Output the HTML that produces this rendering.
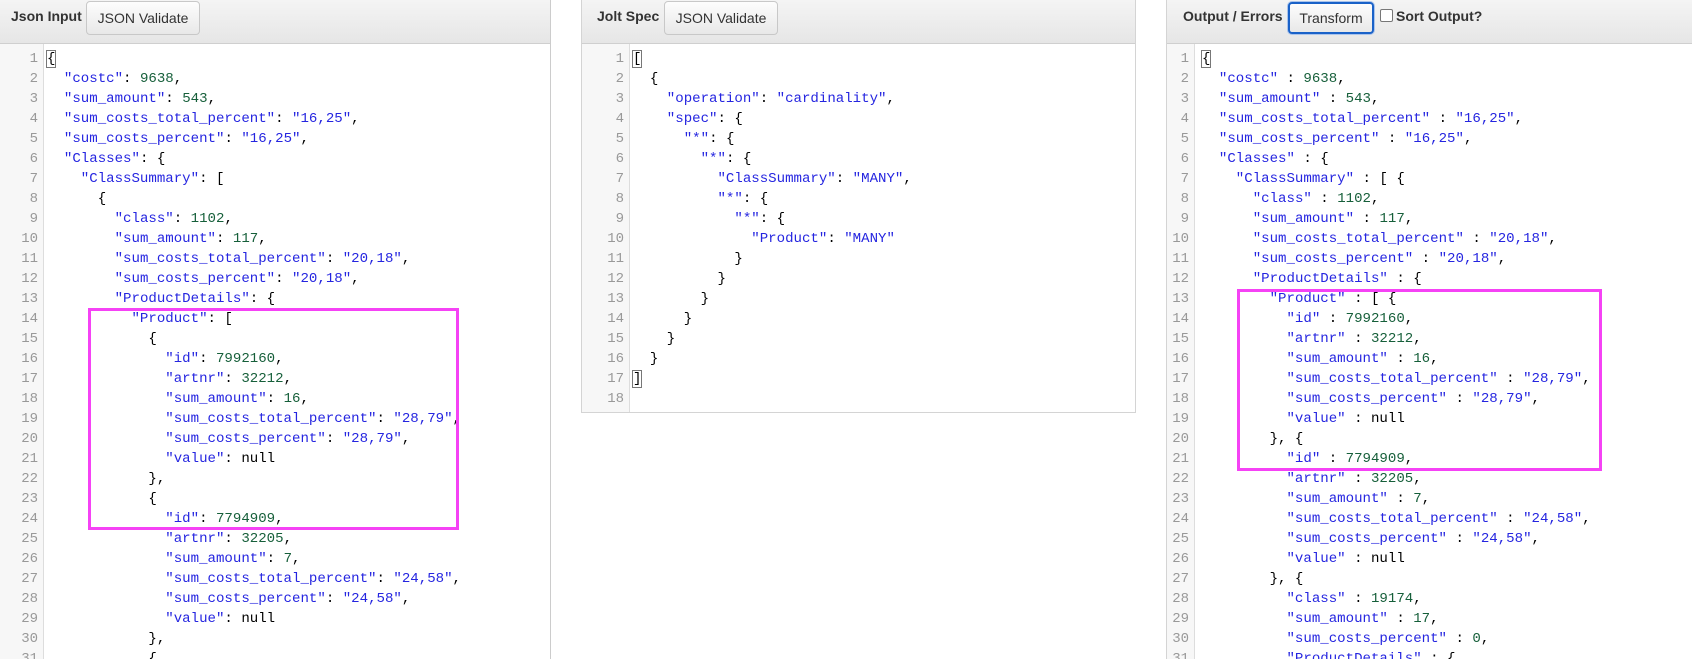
<!DOCTYPE html>
<html><head><meta charset="utf-8"><style>
*{margin:0;padding:0;box-sizing:border-box}
body{width:1692px;height:659px;overflow:hidden;background:#fff;position:relative;font-family:"Liberation Sans",sans-serif}
.panel{position:absolute;top:0;background:#fff;overflow:hidden}
.hdr{position:absolute;left:0;right:0;top:0;height:44px;background:linear-gradient(#f4f4f4,#e6e6e6);border-bottom:1px solid #cfcfcf}
.lbl{position:absolute;top:8px;font-weight:bold;font-size:14px;color:#333}
.btn{position:absolute;top:1px;height:34px;border:1px solid #c8c8c8;border-radius:4px;background:linear-gradient(#fdfdfd,#e8e8e8);font-size:14px;color:#333;text-align:center;line-height:32px}
.gut{position:absolute;left:0;top:44px;bottom:0;background:#f7f7f7;border-right:1px solid #ddd}
.code{position:absolute;top:49px;font-family:"Liberation Mono",monospace;font-size:14.08px;line-height:20px;white-space:pre;color:#000}
.nums{position:absolute;top:49px;left:0;font-family:"Liberation Mono",monospace;font-size:14px;line-height:20px;color:#999;text-align:right;white-space:pre}
.k{color:#2525e0}.n{color:#165f3a}
.cur{outline:1px solid #777}
.box{position:absolute;border:3px solid #f542f5}
</style></head><body>

<div class="panel" style="left:0;width:551px;height:659px;border-right:1px solid #ccc">
<div class="hdr"></div>
<div class="lbl" style="left:11px">Json Input</div>
<div class="btn" style="left:86px;width:114px">JSON Validate</div>
<div class="gut" style="width:44px"></div>
<div class="nums" style="width:38px">1
2
3
4
5
6
7
8
9
10
11
12
13
14
15
16
17
18
19
20
21
22
23
24
25
26
27
28
29
30
31</div>
<div class="code" style="left:47px"><span class="cur">{</span>
  <span class="k">"costc"</span>: <span class="n">9638</span>,
  <span class="k">"sum_amount"</span>: <span class="n">543</span>,
  <span class="k">"sum_costs_total_percent"</span>: <span class="k">"16,25"</span>,
  <span class="k">"sum_costs_percent"</span>: <span class="k">"16,25"</span>,
  <span class="k">"Classes"</span>: {
    <span class="k">"ClassSummary"</span>: [
      {
        <span class="k">"class"</span>: <span class="n">1102</span>,
        <span class="k">"sum_amount"</span>: <span class="n">117</span>,
        <span class="k">"sum_costs_total_percent"</span>: <span class="k">"20,18"</span>,
        <span class="k">"sum_costs_percent"</span>: <span class="k">"20,18"</span>,
        <span class="k">"ProductDetails"</span>: {
          <span class="k">"Product"</span>: [
            {
              <span class="k">"id"</span>: <span class="n">7992160</span>,
              <span class="k">"artnr"</span>: <span class="n">32212</span>,
              <span class="k">"sum_amount"</span>: <span class="n">16</span>,
              <span class="k">"sum_costs_total_percent"</span>: <span class="k">"28,79"</span>,
              <span class="k">"sum_costs_percent"</span>: <span class="k">"28,79"</span>,
              <span class="k">"value"</span>: null
            },
            {
              <span class="k">"id"</span>: <span class="n">7794909</span>,
              <span class="k">"artnr"</span>: <span class="n">32205</span>,
              <span class="k">"sum_amount"</span>: <span class="n">7</span>,
              <span class="k">"sum_costs_total_percent"</span>: <span class="k">"24,58"</span>,
              <span class="k">"sum_costs_percent"</span>: <span class="k">"24,58"</span>,
              <span class="k">"value"</span>: null
            },
            {</div>
<div class="box" style="left:88px;top:308px;width:371px;height:222px"></div>
</div>

<div class="panel" style="left:581px;width:555px;height:413px;border:1px solid #d4d4d4;border-top:none">
<div class="hdr"></div>
<div class="lbl" style="left:15px">Jolt Spec</div>
<div class="btn" style="left:82px;width:114px">JSON Validate</div>
<div class="gut" style="width:48px"></div>
<div class="nums" style="width:42px">1
2
3
4
5
6
7
8
9
10
11
12
13
14
15
16
17
18</div>
<div class="code" style="left:51px"><span class="cur">[</span>
  {
    <span class="k">"operation"</span>: <span class="k">"cardinality"</span>,
    <span class="k">"spec"</span>: {
      <span class="k">"*"</span>: {
        <span class="k">"*"</span>: {
          <span class="k">"ClassSummary"</span>: <span class="k">"MANY"</span>,
          <span class="k">"*"</span>: {
            <span class="k">"*"</span>: {
              <span class="k">"Product"</span>: <span class="k">"MANY"</span>
            }
          }
        }
      }
    }
  }
<span class="cur">]</span>
</div>
</div>

<div class="panel" style="left:1166px;width:526px;height:659px;border-left:1px solid #d4d4d4">
<div class="hdr"></div>
<div class="lbl" style="left:16px">Output / Errors</div>
<div class="btn" style="left:121px;top:2px;width:86px;height:32px;line-height:28px;border:2px solid #1a62c8;box-shadow:0 0 0 1px #aac4ec">Transform</div>
<div style="position:absolute;left:213px;top:9px;width:13px;height:13px;border:1px solid #777;border-radius:2px;background:#fff"></div>
<div class="lbl" style="left:229px">Sort Output?</div>
<div class="gut" style="width:28px"></div>
<div class="nums" style="width:22px">1
2
3
4
5
6
7
8
9
10
11
12
13
14
15
16
17
18
19
20
21
22
23
24
25
26
27
28
29
30
31</div>
<div class="code" style="left:35px"><span class="cur">{</span>
  <span class="k">"costc"</span> : <span class="n">9638</span>,
  <span class="k">"sum_amount"</span> : <span class="n">543</span>,
  <span class="k">"sum_costs_total_percent"</span> : <span class="k">"16,25"</span>,
  <span class="k">"sum_costs_percent"</span> : <span class="k">"16,25"</span>,
  <span class="k">"Classes"</span> : {
    <span class="k">"ClassSummary"</span> : [ {
      <span class="k">"class"</span> : <span class="n">1102</span>,
      <span class="k">"sum_amount"</span> : <span class="n">117</span>,
      <span class="k">"sum_costs_total_percent"</span> : <span class="k">"20,18"</span>,
      <span class="k">"sum_costs_percent"</span> : <span class="k">"20,18"</span>,
      <span class="k">"ProductDetails"</span> : {
        <span class="k">"Product"</span> : [ {
          <span class="k">"id"</span> : <span class="n">7992160</span>,
          <span class="k">"artnr"</span> : <span class="n">32212</span>,
          <span class="k">"sum_amount"</span> : <span class="n">16</span>,
          <span class="k">"sum_costs_total_percent"</span> : <span class="k">"28,79"</span>,
          <span class="k">"sum_costs_percent"</span> : <span class="k">"28,79"</span>,
          <span class="k">"value"</span> : null
        }, {
          <span class="k">"id"</span> : <span class="n">7794909</span>,
          <span class="k">"artnr"</span> : <span class="n">32205</span>,
          <span class="k">"sum_amount"</span> : <span class="n">7</span>,
          <span class="k">"sum_costs_total_percent"</span> : <span class="k">"24,58"</span>,
          <span class="k">"sum_costs_percent"</span> : <span class="k">"24,58"</span>,
          <span class="k">"value"</span> : null
        }, {
          <span class="k">"class"</span> : <span class="n">19174</span>,
          <span class="k">"sum_amount"</span> : <span class="n">17</span>,
          <span class="k">"sum_costs_percent"</span> : <span class="n">0</span>,
          <span class="k">"ProductDetails"</span> : {</div>
<div class="box" style="left:70px;top:289px;width:365px;height:182px"></div>
</div>

</body></html>
